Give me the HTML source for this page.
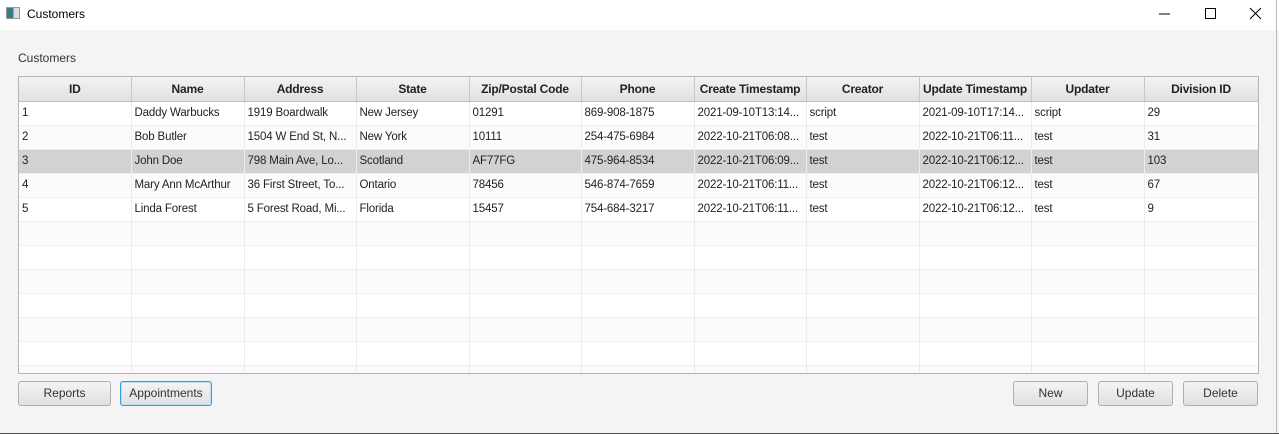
<!DOCTYPE html>
<html><head><meta charset="utf-8"><style>
*{box-sizing:border-box;margin:0;padding:0}
body{width:1279px;height:434px;overflow:hidden;background:#f4f4f4;font-family:"Liberation Sans",sans-serif;font-size:12px;color:#333;position:relative}
.tb{position:absolute;left:0;top:0;width:1279px;height:30px;background:#fff;}
.tb .t{position:absolute;left:27px;top:7px;font-size:12px;color:#000}
.ic{position:absolute;left:6px;top:7px;width:14px;height:12px;border:1px solid #999;background:linear-gradient(90deg,#3a7a8a 0 55%,#ddd 55%)}
.rb{position:absolute;right:2px;top:0;width:1px;height:434px;background:#bbb}
.bb{position:absolute;left:0;bottom:0;width:1279px;height:1px;background:#555}
.lbl{position:absolute;left:18px;top:51px;font-size:12px;color:#333}
.tbl{position:absolute;left:18px;top:76px;width:1241px;height:298px;border:1px solid #b5b5b5;background:#fff;overflow:hidden}
table{border-collapse:collapse;table-layout:fixed;width:1239px}
th{height:24px;background:linear-gradient(#f3f3f3,#e1e1e1);border-right:1px solid #c8c8c8;border-bottom:1px solid #c0c0c0;font-weight:bold;color:#222;font-size:12px;text-align:center;white-space:nowrap;overflow:hidden;letter-spacing:-0.2px}
td{height:24px;border-right:1px solid #ececec;border-bottom:1px solid #f0eef0;padding:0 3px;white-space:nowrap;overflow:hidden;text-overflow:ellipsis;color:#222;font-size:11.5px;letter-spacing:-0.15px}
tr.o td{background:#fff}
tr.e td{background:#fdfafd}
tr.s td{background:#d3d1d4}
.btn{position:absolute;top:381px;height:25px;border:1px solid #b0b0b0;border-radius:3px;background:linear-gradient(#f4f4f4,#e0e0e0);text-align:center;line-height:23px;font-size:12px;color:#333}
.f{border:1px solid #3c9ad6;box-shadow:inset 0 0 0 1px #bfe1f5}
</style></head><body>
<div class="tb"><div class="ic"></div><div class="t">Customers</div>
<svg style="position:absolute;left:1156px;top:7px" width="110" height="14"><path d="M3 7h11" stroke="#000" stroke-width="1"/><rect x="49.5" y="1.5" width="10" height="10" fill="none" stroke="#000"/><path d="M94 1l11 11M105 1L94 12" stroke="#000"/></svg>
</div>
<div class="rb"></div><div class="bb"></div>
<div class="lbl">Customers</div>
<div class="tbl"><table>
<colgroup><col style="width:112px"><col style="width:113px"><col style="width:112px"><col style="width:113px"><col style="width:112px"><col style="width:113px"><col style="width:112px"><col style="width:113px"><col style="width:112px"><col style="width:113px"><col style="width:114px"></colgroup>
<tr><th>ID</th><th>Name</th><th>Address</th><th>State</th><th>Zip/Postal Code</th><th>Phone</th><th>Create Timestamp</th><th>Creator</th><th>Update Timestamp</th><th>Updater</th><th>Division ID</th></tr>
<tr class="o"><td>1</td><td>Daddy Warbucks</td><td>1919 Boardwalk</td><td>New Jersey</td><td>01291</td><td>869-908-1875</td><td>2021-09-10T13:14...</td><td>script</td><td>2021-09-10T17:14...</td><td>script</td><td>29</td></tr>
<tr class="e"><td>2</td><td>Bob Butler</td><td>1504 W End St, N...</td><td>New York</td><td>10111</td><td>254-475-6984</td><td>2022-10-21T06:08...</td><td>test</td><td>2022-10-21T06:11...</td><td>test</td><td>31</td></tr>
<tr class="s"><td>3</td><td>John Doe</td><td>798 Main Ave, Lo...</td><td>Scotland</td><td>AF77FG</td><td>475-964-8534</td><td>2022-10-21T06:09...</td><td>test</td><td>2022-10-21T06:12...</td><td>test</td><td>103</td></tr>
<tr class="e"><td>4</td><td>Mary Ann McArthur</td><td>36 First Street, To...</td><td>Ontario</td><td>78456</td><td>546-874-7659</td><td>2022-10-21T06:11...</td><td>test</td><td>2022-10-21T06:12...</td><td>test</td><td>67</td></tr>
<tr class="o"><td>5</td><td>Linda Forest</td><td>5 Forest Road, Mi...</td><td>Florida</td><td>15457</td><td>754-684-3217</td><td>2022-10-21T06:11...</td><td>test</td><td>2022-10-21T06:12...</td><td>test</td><td>9</td></tr>
<tr class="e"><td></td><td></td><td></td><td></td><td></td><td></td><td></td><td></td><td></td><td></td><td></td></tr>
<tr class="o"><td></td><td></td><td></td><td></td><td></td><td></td><td></td><td></td><td></td><td></td><td></td></tr>
<tr class="e"><td></td><td></td><td></td><td></td><td></td><td></td><td></td><td></td><td></td><td></td><td></td></tr>
<tr class="o"><td></td><td></td><td></td><td></td><td></td><td></td><td></td><td></td><td></td><td></td><td></td></tr>
<tr class="e"><td></td><td></td><td></td><td></td><td></td><td></td><td></td><td></td><td></td><td></td><td></td></tr>
<tr class="o"><td></td><td></td><td></td><td></td><td></td><td></td><td></td><td></td><td></td><td></td><td></td></tr>
<tr class="e"><td></td><td></td><td></td><td></td><td></td><td></td><td></td><td></td><td></td><td></td><td></td></tr>
</table></div>
<div class="btn" style="left:18px;width:93px">Reports</div>
<div class="btn f" style="left:120px;width:92px">Appointments</div>
<div class="btn" style="left:1013px;width:75px">New</div>
<div class="btn" style="left:1098px;width:75px">Update</div>
<div class="btn" style="left:1183px;width:75px">Delete</div>
</body></html>
